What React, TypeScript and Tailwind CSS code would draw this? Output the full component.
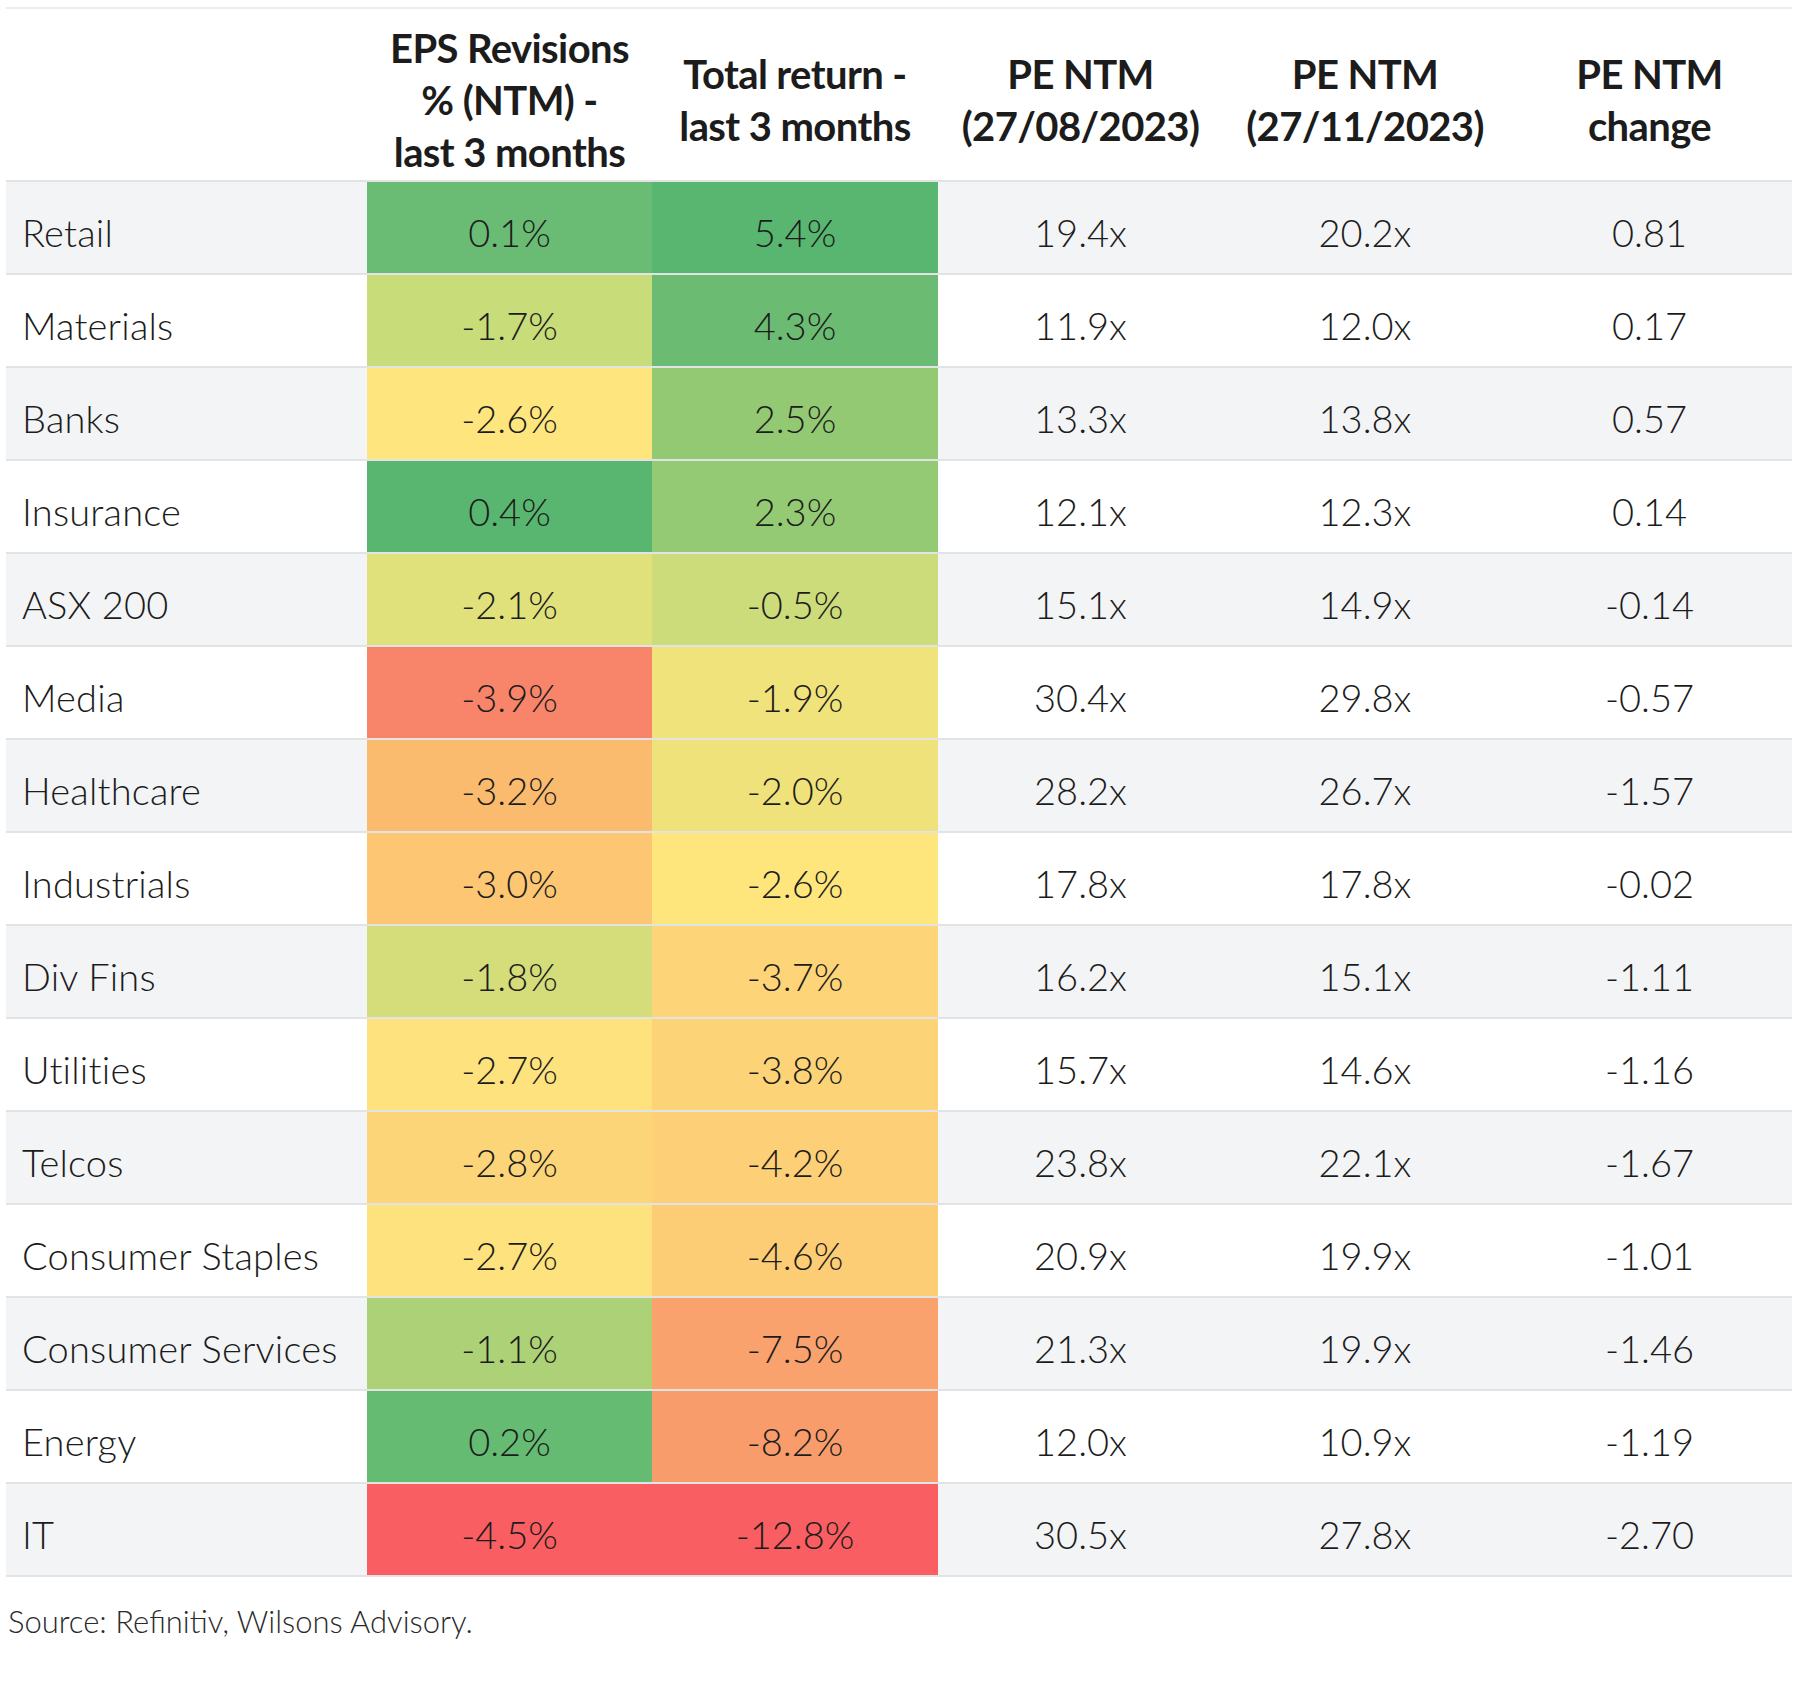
import React from "react";

type Row = {
  name: string;
  eps: string;
  epsBg: string;
  tr: string;
  trBg: string;
  pe1: string;
  pe2: string;
  chg: string;
};

const rows: Row[] = [
  { name: "Retail", eps: "0.1%", epsBg: "bg-[#6abb74]", tr: "5.4%", trBg: "bg-[#59b670]", pe1: "19.4x", pe2: "20.2x", chg: "0.81" },
  { name: "Materials", eps: "-1.7%", epsBg: "bg-[#c9dc7a]", tr: "4.3%", trBg: "bg-[#6cbb73]", pe1: "11.9x", pe2: "12.0x", chg: "0.17" },
  { name: "Banks", eps: "-2.6%", epsBg: "bg-[#fee57e]", tr: "2.5%", trBg: "bg-[#93c973]", pe1: "13.3x", pe2: "13.8x", chg: "0.57" },
  { name: "Insurance", eps: "0.4%", epsBg: "bg-[#58b670]", tr: "2.3%", trBg: "bg-[#94ca74]", pe1: "12.1x", pe2: "12.3x", chg: "0.14" },
  { name: "ASX 200", eps: "-2.1%", epsBg: "bg-[#e1e17c]", tr: "-0.5%", trBg: "bg-[#cddc7a]", pe1: "15.1x", pe2: "14.9x", chg: "-0.14" },
  { name: "Media", eps: "-3.9%", epsBg: "bg-[#f8856a]", tr: "-1.9%", trBg: "bg-[#f0e37b]", pe1: "30.4x", pe2: "29.8x", chg: "-0.57" },
  { name: "Healthcare", eps: "-3.2%", epsBg: "bg-[#fbbb6f]", tr: "-2.0%", trBg: "bg-[#efe27a]", pe1: "28.2x", pe2: "26.7x", chg: "-1.57" },
  { name: "Industrials", eps: "-3.0%", epsBg: "bg-[#fdc673]", tr: "-2.6%", trBg: "bg-[#fee67d]", pe1: "17.8x", pe2: "17.8x", chg: "-0.02" },
  { name: "Div Fins", eps: "-1.8%", epsBg: "bg-[#d5dd7a]", tr: "-3.7%", trBg: "bg-[#fdd478]", pe1: "16.2x", pe2: "15.1x", chg: "-1.11" },
  { name: "Utilities", eps: "-2.7%", epsBg: "bg-[#fee27d]", tr: "-3.8%", trBg: "bg-[#fdd378]", pe1: "15.7x", pe2: "14.6x", chg: "-1.16" },
  { name: "Telcos", eps: "-2.8%", epsBg: "bg-[#fdd579]", tr: "-4.2%", trBg: "bg-[#fdcf76]", pe1: "23.8x", pe2: "22.1x", chg: "-1.67" },
  { name: "Consumer Staples", eps: "-2.7%", epsBg: "bg-[#fee27d]", tr: "-4.6%", trBg: "bg-[#fdcd75]", pe1: "20.9x", pe2: "19.9x", chg: "-1.01" },
  { name: "Consumer Services", eps: "-1.1%", epsBg: "bg-[#acd176]", tr: "-7.5%", trBg: "bg-[#f9a26d]", pe1: "21.3x", pe2: "19.9x", chg: "-1.46" },
  { name: "Energy", eps: "0.2%", epsBg: "bg-[#66bb73]", tr: "-8.2%", trBg: "bg-[#f99c6c]", pe1: "12.0x", pe2: "10.9x", chg: "-1.19" },
  { name: "IT", eps: "-4.5%", epsBg: "bg-[#f85e62]", tr: "-12.8%", trBg: "bg-[#f85e62]", pe1: "30.5x", pe2: "27.8x", chg: "-2.70" },
];

const headers = [
  ["EPS Revisions", "% (NTM) -", "last 3 months"],
  ["Total return -", "last 3 months"],
  ["PE NTM", "(27/08/2023)"],
  ["PE NTM", "(27/11/2023)"],
  ["PE NTM", "change"],
];

const cols = "grid grid-cols-[361px_285px_286px_285px_284px_285px]";
// every cell sits a touch below the row's middle, as in the source chart
const cell = "flex items-center justify-center pt-[10px]";

export default function App() {
  return (
    <div className="w-[1800px] h-[1696px] bg-white pl-[6px] pt-[7px] text-[#1c1c1c] font-['Lato','Liberation_Sans',sans-serif]">
      <div className="w-[1786px] border-t-2 border-[#ececec]">
        {/* Header */}
        <div className={`${cols} h-[173px] border-b-2 border-[#e2e3e5]`}>
          <div />
          {headers.map((lines, i) => (
            <div
              key={i}
              className="flex flex-col items-center justify-center pt-[10px] text-[40px] leading-[52px] font-bold tracking-[-0.6px] whitespace-nowrap"
            >
              {lines.map((l) => (
                <span key={l}>{l}</span>
              ))}
            </div>
          ))}
        </div>

        {/* Body */}
        {rows.map((r, i) => (
          <div
            key={r.name}
            className={`${cols} h-[93px] border-b-2 border-[#e2e3e5] text-[38px] font-light ${
              i % 2 === 0 ? "bg-[#f3f4f6]" : "bg-white"
            }`}
          >
            <div className="flex items-center pt-[10px] pl-[16px] whitespace-nowrap tracking-[0.2px]">{r.name}</div>
            <div className={`${cell} ${r.epsBg}`}>{r.eps}</div>
            <div className={`${cell} ${r.trBg}`}>{r.tr}</div>
            <div className={cell}>{r.pe1}</div>
            <div className={cell}>{r.pe2}</div>
            <div className={cell}>{r.chg}</div>
          </div>
        ))}
      </div>

      <p className="mt-[21px] pl-[2px] text-[31px] font-light text-[#2a2a2a]">
        Source: Refinitiv, Wilsons Advisory.
      </p>
    </div>
  );
}
